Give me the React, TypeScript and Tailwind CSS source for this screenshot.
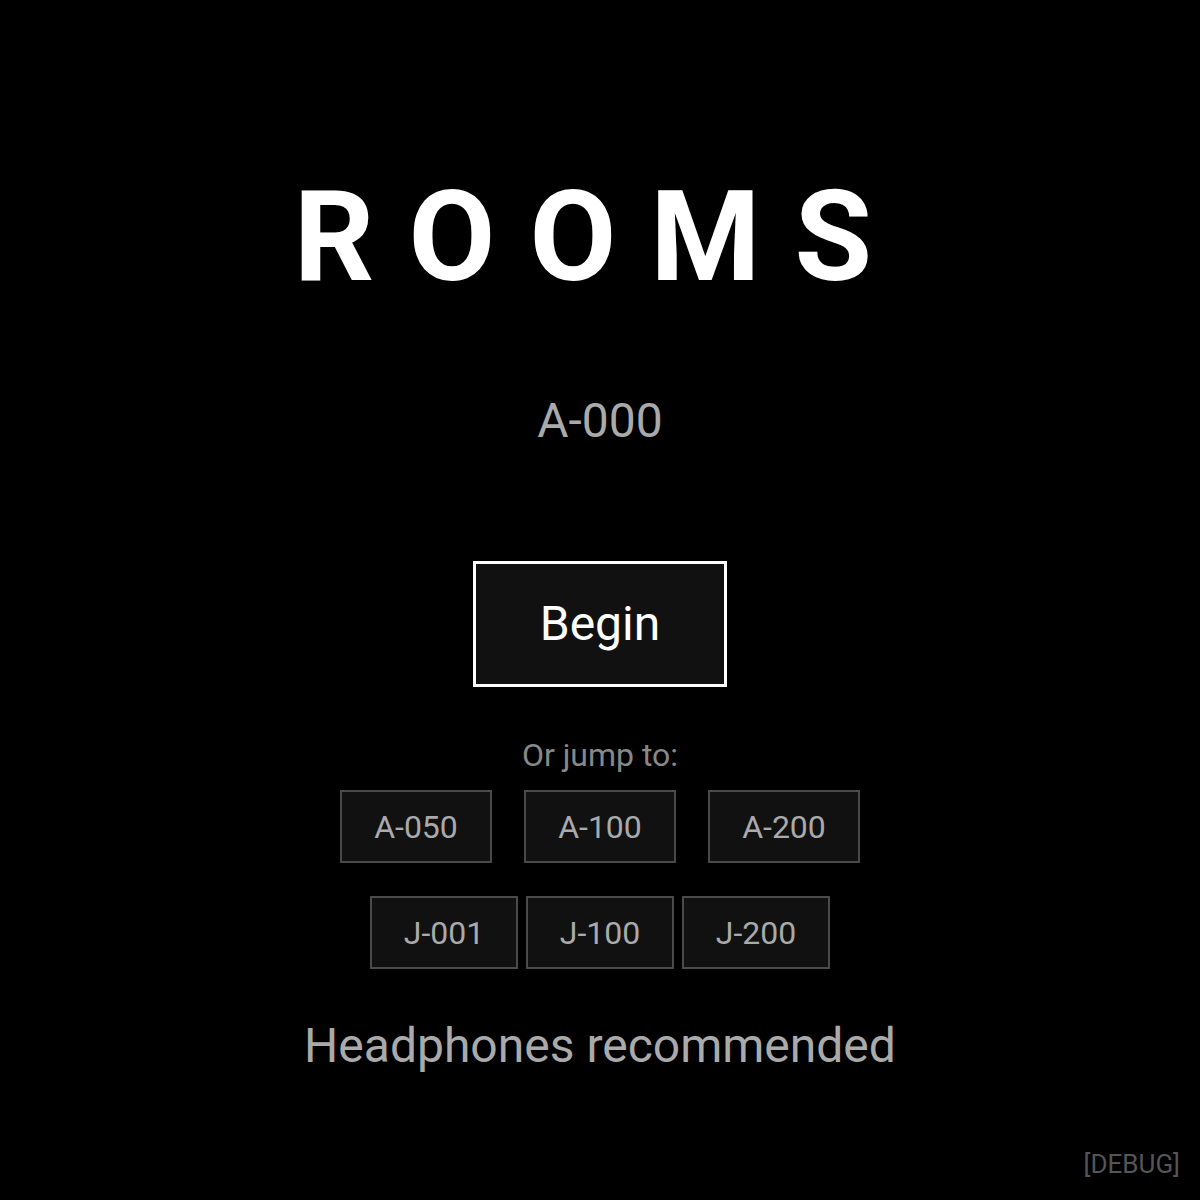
import React from "react"

const rowA = ["A-050", "A-100", "A-200"]
const rowJ = ["J-001", "J-100", "J-200"]

function JumpButton({ label, wide }: { label: string; wide?: boolean }) {
    return (
        <button
            className={
                (wide ? "w-[152px] " : "w-[148px] ") +
                "h-[73px] border-2 border-[#4a4a4a] bg-[#111111] text-[32px] leading-none text-[#aaaaaa] flex items-center justify-center"
            }
        >
            {label}
        </button>
    )
}

export default function App() {
    return (
        <div
            className="relative w-[1200px] h-[1200px] bg-black flex flex-col items-center"
            style={{ fontFamily: "Roboto, 'Liberation Sans', sans-serif" }}
        >
            <h1 className="mt-[174px] text-[126px] leading-none font-bold text-white tracking-[0.27em]">
                ROOMS
            </h1>

            <div className="mt-[97px] text-[48px] leading-none text-[#aaaaaa]">A-000</div>

            <button className="mt-[116px] w-[254px] h-[126px] border-[3px] border-white bg-[#111111] text-[48px] leading-none text-white flex items-center justify-center">
                Begin
            </button>

            <div className="mt-[52px] text-[32px] leading-none text-[#888888]">Or jump to:</div>

            <div className="mt-[19px] flex gap-[32px]">
                {rowA.map((r) => (
                    <JumpButton key={r} label={r} wide />
                ))}
            </div>

            <div className="mt-[33px] flex gap-[8px]">
                {rowJ.map((r) => (
                    <JumpButton key={r} label={r} />
                ))}
            </div>

            <div className="mt-[53px] text-[48px] leading-none text-[#aaaaaa]">Headphones recommended</div>

            <div className="absolute right-[20px] bottom-[23px] text-[26px] leading-none text-[#555555]">[DEBUG]</div>
        </div>
    )
}
